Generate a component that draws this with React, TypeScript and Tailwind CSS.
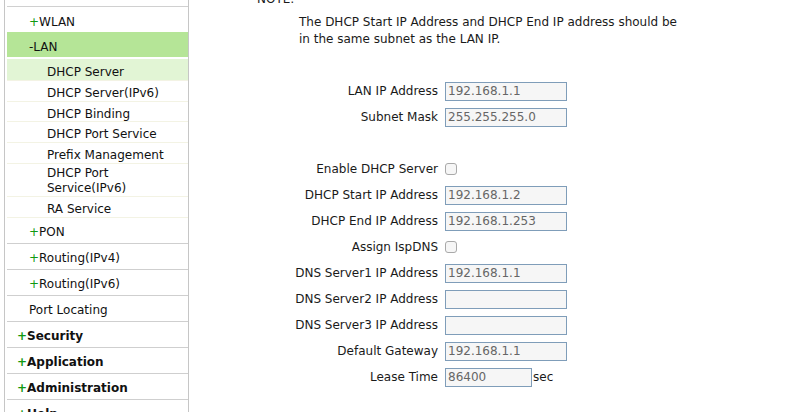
import React from "react";

const FONT = { fontFamily: '"DejaVu Sans", Verdana, sans-serif' };

const SUBS = [
  { label: "DHCP Server", active: true },
  { label: "DHCP Server(IPv6)" },
  { label: "DHCP Binding" },
  { label: "DHCP Port Service" },
  { label: "Prefix Management" },
  { label: "DHCP Port Service(IPv6)", twoLine: true },
  { label: "RA Service" },
];

type Row =
  | { kind: "input"; label: string; value: string; suffix?: string; short?: boolean }
  | { kind: "check"; label: string }
  | { kind: "blank" };

const ROWS: Row[] = [
  { kind: "input", label: "LAN IP Address", value: "192.168.1.1" },
  { kind: "input", label: "Subnet Mask", value: "255.255.255.0" },
  { kind: "blank" },
  { kind: "check", label: "Enable DHCP Server" },
  { kind: "input", label: "DHCP Start IP Address", value: "192.168.1.2" },
  { kind: "input", label: "DHCP End IP Address", value: "192.168.1.253" },
  { kind: "check", label: "Assign IspDNS" },
  { kind: "input", label: "DNS Server1 IP Address", value: "192.168.1.1" },
  { kind: "input", label: "DNS Server2 IP Address", value: "" },
  { kind: "input", label: "DNS Server3 IP Address", value: "" },
  { kind: "input", label: "Default Gateway", value: "192.168.1.1" },
  { kind: "input", label: "Lease Time", value: "86400", suffix: "sec", short: true },
];

function Plus() {
  return <span className="text-[#119911]">+</span>;
}

function Sidebar() {
  return (
    <aside className="ml-[4px] w-[185px] shrink-0 border-l border-r border-[#c6c6c6] pl-[2px] text-[12px] text-[#111]">
      <div className="h-[7px] border-b border-[#d0d0d0]" />
      <div className="flex h-[25px] items-center pl-[22px] pt-[5px]">
        <Plus />
        WLAN
      </div>
      <div className="flex h-[25px] items-center bg-[#b5e597] pl-[22px] pt-[5px]">-LAN</div>
      <ul className="pt-[2px]">
        {SUBS.map((s) => (
          <li
            key={s.label}
            className={`border-b border-[#f3f3e4] pl-[40px] pr-[20px] leading-[14.7px] ${
              s.twoLine ? "pt-[2.5px] pb-0" : s.active ? "pt-[6px] pb-[0.1px]" : "pt-[5px] pb-[0.1px]"
            } ${s.active ? "bg-[#e2f5d5]" : ""}`}
          >
            {s.twoLine ? (
              <>
                DHCP Port
                <br />
                Service(IPv6)
              </>
            ) : (
              s.label
            )}
          </li>
        ))}
      </ul>
      {["PON", "Routing(IPv4)", "Routing(IPv6)"].map((l) => (
        <div key={l} className="flex h-[26px] items-center border-b border-[#cfcfcf] pl-[22px] pt-[4px]">
          <Plus />
          {l}
        </div>
      ))}
      <div className="flex h-[26px] items-center border-b border-[#cfcfcf] pl-[22px] pt-[4px]">Port Locating</div>
      {["Security", "Application", "Administration", "Help"].map((l) => (
        <div key={l} className="flex h-[26px] items-center border-b border-[#cfcfcf] pl-[10px] pt-[4px] font-bold">
          <Plus />
          {l}
        </div>
      ))}
    </aside>
  );
}

function Field({ row }: { row: Row }) {
  if (row.kind === "blank") return <div className="h-[26px]" />;
  return (
    <div className="flex h-[26px] items-center">
      <div className="w-[250px] shrink-0 pr-[1px] text-right">{row.label}</div>
      <div className="ml-[6px] flex items-center">
        {row.kind === "check" ? (
          <span className="inline-block h-[12px] w-[12px] rounded-[3px] border border-[#a9a9a9] bg-[#f6f6f6]" />
        ) : (
          <>
            <input
              readOnly
              value={row.value}
              className={`h-[19px] border border-[#7f9db9] bg-[#f6f6f6] px-[2px] text-[12px] text-[#666] outline-none ${
                row.short ? "w-[87px]" : "w-[122px]"
              }`}
              style={FONT}
            />
            {row.suffix && <span className="ml-[1px]">{row.suffix}</span>}
          </>
        )}
      </div>
    </div>
  );
}

export default function App() {
  return (
    <div className="flex h-[412px] w-[785px] overflow-hidden bg-white text-[12px] text-[#1a1a1a]" style={FONT}>
      <Sidebar />
      <main className="min-w-0 flex-1">
        <div className="-mt-[9px] h-[17px] pl-[68px] leading-[17px]">NOTE:</div>
        <p className="mt-[6px] w-[390px] pl-[110px] leading-[17px] box-content">
          The DHCP Start IP Address and DHCP End IP address should be in the same subnet as the LAN IP.
        </p>
        <div className="mt-[30px]">
          {ROWS.map((r, i) => (
            <Field key={i} row={r} />
          ))}
        </div>
      </main>
    </div>
  );
}
